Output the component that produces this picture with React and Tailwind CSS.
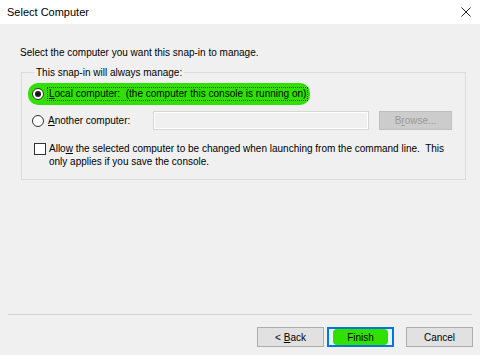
const GREEN = 'bg-[#2fe000]'

function Radio({ checked }) {
  return (
    <span className="flex h-[12px] w-[12px] shrink-0 items-center justify-center rounded-full border border-[#333333] bg-white">
      {checked && <span className="h-[6px] w-[6px] rounded-full bg-[#1a1a1a]" />}
    </span>
  )
}

function WinButton({ children, focused }) {
  if (focused) {
    return (
      <button className="flex h-[20px] w-[67px] items-center justify-center border-2 border-[#0078d7] bg-[#e5f1fb] px-[4px]">
        <span className={`flex h-[16px] w-full items-center justify-center rounded-[4px] ${GREEN}`}>{children}</span>
      </button>
    )
  }
  return (
    <button className="flex h-[20px] w-[67px] items-center justify-center border border-[#adadad] bg-[#e1e1e1]">
      {children}
    </button>
  )
}

export default function App() {
  return (
    <div className="flex h-[355px] w-[480px] flex-col bg-[#f0f0f0] font-['Liberation_Sans',Arial,sans-serif] text-[10px] leading-[13px] text-black">
      {/* title bar */}
      <div className="flex h-[24px] items-center justify-between bg-white pl-[7px] pr-[4px]">
        <span className="text-[11px]">Select Computer</span>
        <svg width="10" height="10" viewBox="0 0 10 10" className="mr-[5px]">
          <path d="M0.5 0.5 L9.5 9.5 M9.5 0.5 L0.5 9.5" stroke="#222" strokeWidth="1" fill="none" />
        </svg>
      </div>

      <div className="flex flex-1 flex-col pl-[20px] pt-[22px]">
        <p>Select the computer you want this snap-in to manage.</p>

        <fieldset className="ml-px mr-[14px] mt-[7px] border border-[#dcdcdc] pb-[11px] pl-[6px]">
          <legend className="ml-[6px] px-[2px]">This snap-in will always manage:</legend>

          <div className={`mt-[4px] flex h-[22px] w-[282px] items-center gap-[3px] rounded-[10px] pl-[4px] ${GREEN}`}>
            <Radio checked />
            <span className="border border-dotted border-[#222] px-px leading-[12px]">
              <span className="underline">L</span>ocal computer:&nbsp;&nbsp;(the computer this console is running on)
            </span>
          </div>

          <div className="mt-[6px] flex h-[19px] items-center pl-[4px]">
            <Radio />
            <span className="ml-[4px] w-[105px]">
              <span className="underline">A</span>nother computer:
            </span>
            <div className="h-[19px] w-[216px] border border-[#d6d6d6] bg-[#f0f0f0] shadow-[inset_0_0_0_1px_#ffffff]" />
            <div className="ml-[10px] flex h-[19px] w-[73px] items-center justify-center border border-[#bfbfbf] bg-[#cccccc] text-[#9a9a9a]">
              B<span className="underline">r</span>owse...
            </div>
          </div>

          <div className="mt-[12px] flex items-start pl-[6px]">
            <span className="mt-px h-[12px] w-[12px] shrink-0 border border-[#333333] bg-white" />
            <span className="ml-[3px]">
              Allo<span className="underline">w</span> the selected computer to be changed when launching from the command line.&nbsp; This
              <br />
              only applies if you save the console.
            </span>
          </div>
        </fieldset>
      </div>

      {/* footer */}
      <div className="mx-[8px] border-t border-[#d0d0d0]" />
      <div className="flex items-center justify-end pb-[8px] pr-[7px] pt-[12px]">
        <WinButton>
          &lt; <span className="ml-[3px] underline">B</span>ack
        </WinButton>
        <div className="ml-[3px]">
          <WinButton focused>Finish</WinButton>
        </div>
        <div className="ml-[12px]">
          <WinButton>Cancel</WinButton>
        </div>
      </div>
    </div>
  )
}
